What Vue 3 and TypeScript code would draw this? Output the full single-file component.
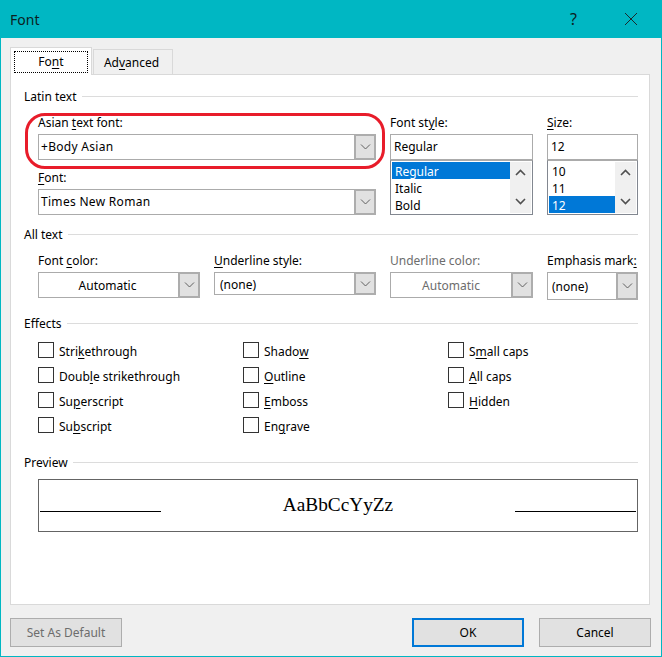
<script setup lang="ts">
const effects = [
  [
    { before: 'Stri', key: 'k', after: 'ethrough' },
    { before: 'Doub', key: 'l', after: 'e strikethrough' },
    { before: 'Su', key: 'p', after: 'erscript' },
    { before: 'Su', key: 'b', after: 'script' },
  ],
  [
    { before: 'Shado', key: 'w', after: '' },
    { before: '', key: 'O', after: 'utline' },
    { before: '', key: 'E', after: 'mboss' },
    { before: 'En', key: 'g', after: 'rave' },
  ],
  [
    { before: 'S', key: 'm', after: 'all caps' },
    { before: '', key: 'A', after: 'll caps' },
    { before: '', key: 'H', after: 'idden' },
  ],
]
</script>

<template>
  <div class="dialog">
    <div class="titlebar">
      <span class="title">Font</span>
      <span class="help">?</span>
      <svg class="close" width="14" height="14" viewBox="0 0 14 14">
        <path d="M1 1 L13 13 M13 1 L1 13" stroke="#1a2a2c" stroke-width="1" fill="none" />
      </svg>
    </div>

    <div class="body">
      <div class="tabs">
        <div class="tab active"><span class="tab-focus">Fo<u>n</u>t</span></div>
        <div class="tab">Ad<u>v</u>anced</div>
      </div>

      <div class="panel">
        <div class="group-head"><span>Latin text</span><i></i></div>
        <div class="latin">
          <div class="col-main">
            <label>Asian <u>t</u>ext font:</label>
            <div class="combo">
              <span class="value">+Body Asian</span>
              <span class="drop"><svg width="11" height="6" viewBox="0 0 11 6"><path d="M1 0.5 L5.5 5 L10 0.5" fill="none" stroke="#606060" /></svg></span>
            </div>
            <label class="second"><u>F</u>ont:</label>
            <div class="combo">
              <span class="value">Times New Roman</span>
              <span class="drop"><svg width="11" height="6" viewBox="0 0 11 6"><path d="M1 0.5 L5.5 5 L10 0.5" fill="none" stroke="#606060" /></svg></span>
            </div>
            <div class="highlight"></div>
          </div>
          <div>
            <label>Font st<u>y</u>le:</label>
            <div class="textbox">Regular</div>
            <div class="list">
              <div class="items">
                <div class="item sel">Regular</div>
                <div class="item">Italic</div>
                <div class="item">Bold</div>
              </div>
              <div class="scroll">
                <svg width="11" height="7" viewBox="0 0 11 7"><path d="M1 6 L5.5 1.5 L10 6" fill="none" stroke="#505050" stroke-width="1.6" /></svg>
                <svg width="11" height="7" viewBox="0 0 11 7"><path d="M1 1 L5.5 5.5 L10 1" fill="none" stroke="#505050" stroke-width="1.6" /></svg>
              </div>
            </div>
          </div>
          <div>
            <label><u>S</u>ize:</label>
            <div class="textbox">12</div>
            <div class="list">
              <div class="items">
                <div class="item">10</div>
                <div class="item">11</div>
                <div class="item sel">12</div>
              </div>
              <div class="scroll">
                <svg width="11" height="7" viewBox="0 0 11 7"><path d="M1 6 L5.5 1.5 L10 6" fill="none" stroke="#505050" stroke-width="1.6" /></svg>
                <svg width="11" height="7" viewBox="0 0 11 7"><path d="M1 1 L5.5 5.5 L10 1" fill="none" stroke="#505050" stroke-width="1.6" /></svg>
              </div>
            </div>
          </div>
        </div>

        <div class="group-head all"><span>All text</span><i></i></div>
        <div class="alltext">
          <div>
            <label>Font <u>c</u>olor:</label>
            <div class="combo center first">
              <span class="value">Automatic</span>
              <span class="drop"><svg width="11" height="6" viewBox="0 0 11 6"><path d="M1 0.5 L5.5 5 L10 0.5" fill="none" stroke="#606060" /></svg></span>
            </div>
          </div>
          <div>
            <label><u>U</u>nderline style:</label>
            <div class="combo low">
              <span class="value">(none)</span>
              <span class="drop"><svg width="11" height="6" viewBox="0 0 11 6"><path d="M1 0.5 L5.5 5 L10 0.5" fill="none" stroke="#606060" /></svg></span>
            </div>
          </div>
          <div>
            <label class="disabled">Underline color:</label>
            <div class="combo center disabled">
              <span class="value">Automatic</span>
              <span class="drop"><svg width="11" height="6" viewBox="0 0 11 6"><path d="M1 0.5 L5.5 5 L10 0.5" fill="none" stroke="#606060" /></svg></span>
            </div>
          </div>
          <div>
            <label class="clip">Emphasis mark<u>:</u></label>
            <div class="combo high">
              <span class="value">(none)</span>
              <span class="drop"><svg width="11" height="6" viewBox="0 0 11 6"><path d="M1 0.5 L5.5 5 L10 0.5" fill="none" stroke="#606060" /></svg></span>
            </div>
          </div>
        </div>

        <div class="group-head effects-head"><span>Effects</span><i></i></div>
        <div class="effects">
          <div v-for="(col, i) in effects" :key="i" class="effect-col">
            <div v-for="e in col" :key="e.key" class="check">
              <span class="box"></span>
              <span class="check-text">{{ e.before }}<u>{{ e.key }}</u>{{ e.after }}</span>
            </div>
          </div>
        </div>

        <div class="group-head preview-head"><span>Preview</span><i></i></div>
        <div class="preview">
          <i class="rule"></i>
          <span class="sample">AaBbCcYyZz</span>
          <i class="rule"></i>
        </div>
      </div>

      <div class="footer">
        <button class="btn off">Set As Default</button>
        <span class="spacer"></span>
        <button class="btn primary">OK</button>
        <button class="btn">Cancel</button>
      </div>
    </div>
  </div>
</template>

<style>
html, body { margin: 0; background: #f0f0f0; }
</style>

<style scoped>
* { box-sizing: border-box; }
.dialog {
  width: 662px;
  height: 657px;
  border: 1px solid #00b7c3;
  border-top: 0;
  background: #f0f0f0;
  font-family: "Noto Sans", "Open Sans", sans-serif;
  font-size: 12px;
  color: #000;
  overflow: hidden;
}
u { text-underline-offset: 2px; text-decoration-thickness: 1px; }
label { display: block; height: 16px; line-height: 18px; margin-bottom: 4px; white-space: nowrap; }

.titlebar {
  height: 38px;
  background: #00b7c3;
  display: flex;
  align-items: center;
  padding: 0 23px 0 9px;
  color: #0c1f22;
}
.title { font-size: 14px; flex: 1; }
.help { font-size: 16px; margin-right: 47px; }

.body { padding: 9px 10px 0 9px; }
.tabs { display: flex; height: 27px; align-items: flex-end; position: relative; z-index: 1; }
.tab {
  width: 80px;
  height: 25px;
  margin-left: 1px;
  padding-right: 3px;
  text-align: center;
  line-height: 25px;
  border: 1px solid #d9d9d9;
  border-bottom: 0;
}
.tab.active {
  width: 82px;
  height: 28px;
  margin: 0 0 -1px;
  background: #fff;
  padding: 3px;
  line-height: 20px;
}
.tab-focus { display: block; height: 22px; border: 1px dotted #000; }

.panel {
  width: 640px;
  height: 531px;
  background: #fff;
  border: 1px solid #d9d9d9;
  padding: 13px 11px 0 13px;
}
.group-head { display: flex; align-items: center; gap: 5px; height: 16px; margin-bottom: 10px; }
.group-head i { flex: 1; height: 1px; background: #dcdcdc; }
.group-head.all { margin-top: 11px; }
.group-head.effects-head { margin-top: 15px; margin-bottom: 11px; }
.group-head.preview-head { margin-top: 12px; margin-bottom: 9px; }

.latin, .alltext { display: grid; column-gap: 14px; padding-left: 14px; }
.latin { grid-template-columns: 338px 143px 91px; }
.alltext { grid-template-columns: 162px 162px 143px 91px; height: 48px; }
.col-main { position: relative; }
.second { margin-top: 9px; }
.highlight {
  position: absolute;
  left: -13px;
  top: -1px;
  width: 360px;
  height: 56px;
  border: 3px solid #e81c2a;
  border-radius: 20px;
  pointer-events: none;
}

.combo {
  display: flex;
  background: #fff;
  border: 1px solid #ababab;
  height: 26px;
  align-items: center;
}
.combo.low { height: 23px; }
.combo.high { height: 28px; }
.combo .value { flex: 1; padding-left: 2px; white-space: nowrap; }
.latin .combo .value { padding-bottom: 2px; letter-spacing: 0.3px; }
.combo.center .value { text-align: center; padding-left: 0; }
.combo.first .value { padding-right: 2px; }
.combo.low .value { padding: 2px 0 0 5px; }
.combo.high .value { padding-left: 4px; }
.drop {
  width: 22px;
  align-self: stretch;
  margin: -1px -1px -1px 0;
  background: #e1e1e1;
  border: 2px solid #adadad;
  display: flex;
  align-items: center;
  justify-content: center;
}
.combo.disabled .value, label.disabled { color: #6d6d6d; }
.clip { overflow: hidden; }

.textbox {
  height: 26px;
  line-height: 24px;
  border: 1px solid #ababab;
  padding-left: 3px;
  background: #fff;
}
.list {
  height: 55px;
  border: 1px solid #828790;
  border-top-color: #ababab;
  display: flex;
  padding: 1px;
}
.items { flex: 1; }
.item { height: 17px; line-height: 19px; padding-left: 3px; }
.item.sel { background: #0078d7; color: #fff; }
.scroll {
  width: 21px;
  background: #f0f0f0;
  display: flex;
  flex-direction: column;
  align-items: center;
  justify-content: space-between;
  padding: 7px 0 8px;
}

.effects { display: grid; grid-template-columns: 205px 205px auto; padding-left: 14px; height: 100px; }
.check { display: flex; align-items: flex-start; gap: 5px; height: 25px; }
.check-text { line-height: 16px; margin-top: 2px; }
.box { width: 16px; height: 16px; border: 1px solid #333; background: #fff; }

.preview {
  margin-left: 14px;
  width: 600px;
  height: 53px;
  border: 1px solid #646464;
  display: flex;
  align-items: center;
  padding: 0 1px;
}
.rule { width: 121px; height: 1px; background: #000; margin-top: 12px; }
.sample {
  flex: 1;
  padding-bottom: 2px;
  text-align: center;
  font-family: "Liberation Serif", serif;
  font-size: 19.3px;
}

.footer { display: flex; gap: 15px; margin-top: 13px; width: 641px; }
.spacer { flex: 1; }
.btn {
  width: 112px;
  height: 29px;
  background: #e1e1e1;
  border: 1px solid #adadad;
  font: inherit;
  color: #000;
  padding: 0;
}
.btn.off { color: #6d6d6d; }
.btn.primary { border: 2px solid #0078d7; }
</style>
